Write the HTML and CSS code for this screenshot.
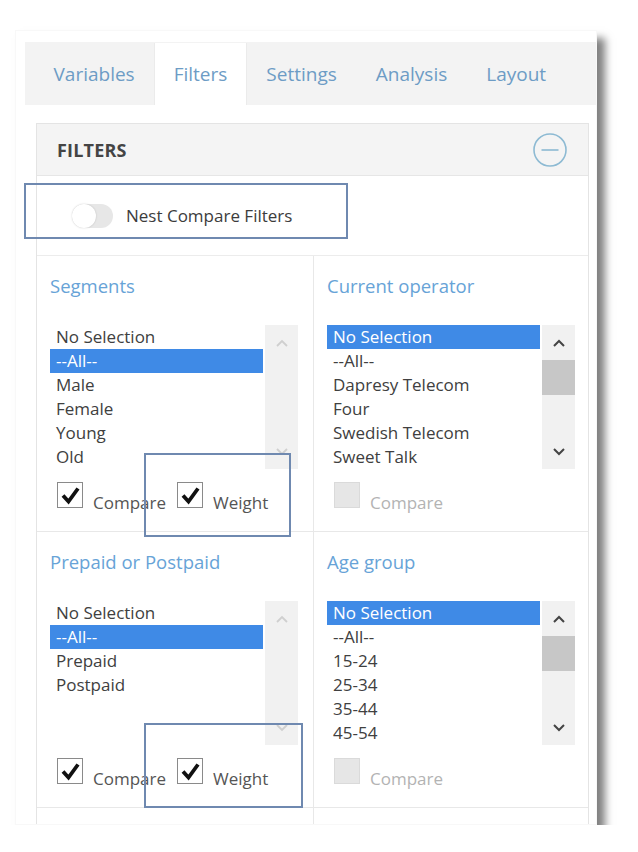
FILE: index.html
```html
<!DOCTYPE html>
<html lang="en">
<head>
<meta charset="utf-8">
<title>Filters</title>
<link rel="stylesheet" href="styles.css">
</head>
<body>
<div class="frame">
  <nav class="tabs">
    <span class="tab">Variables</span>
    <span class="tab active">Filters</span>
    <span class="tab">Settings</span>
    <span class="tab">Analysis</span>
    <span class="tab">Layout</span>
  </nav>

  <section class="panel">
    <header class="panel-head">
      <h2 class="panel-title">FILTERS</h2>
      <svg class="collapse" viewBox="0 0 34 34" width="34" height="34" aria-hidden="true">
        <circle cx="17" cy="17" r="16" fill="none" stroke="#8dbad3" stroke-width="1.6"/>
        <line x1="8.5" y1="17" x2="25.5" y2="17" stroke="#8dbad3" stroke-width="1.6"/>
      </svg>
    </header>

    <div class="nest-row">
      <span class="toggle"><span class="knob"></span></span>
      <span class="nest-label">Nest Compare Filters</span>
    </div>

    <div class="grid">
      <div class="cell">
        <h3 class="cell-title">Segments</h3>
        <div class="listbox">
          <ul class="options">
            <li>No Selection</li>
            <li class="sel">--All--</li>
            <li>Male</li>
            <li>Female</li>
            <li>Young</li>
            <li>Old</li>
          </ul>
          <div class="scrollbar off">
            <div class="arrow"><svg viewBox="0 0 12 8" width="12" height="8"><polyline points="1,7 6,2 11,7" fill="none" stroke="currentColor" stroke-width="1.8"/></svg></div>
            <div class="track"></div>
            <div class="arrow"><svg viewBox="0 0 12 8" width="12" height="8"><polyline points="1,1 6,6 11,1" fill="none" stroke="currentColor" stroke-width="1.8"/></svg></div>
          </div>
        </div>
        <div class="checks">
          <label class="check"><span class="box"><svg viewBox="0 0 24 24" width="24" height="24"><path d="M5 12.5 L10.5 18.5 L20 5.5" fill="none" stroke="#111" stroke-width="3.8"/></svg></span><span class="check-text">Compare</span></label>
          <label class="check"><span class="box"><svg viewBox="0 0 24 24" width="24" height="24"><path d="M5 12.5 L10.5 18.5 L20 5.5" fill="none" stroke="#111" stroke-width="3.8"/></svg></span><span class="check-text">Weight</span></label>
        </div>
      </div>

      <div class="cell">
        <h3 class="cell-title">Current operator</h3>
        <div class="listbox">
          <ul class="options">
            <li class="sel">No Selection</li>
            <li>--All--</li>
            <li>Dapresy Telecom</li>
            <li>Four</li>
            <li>Swedish Telecom</li>
            <li>Sweet Talk</li>
          </ul>
          <div class="scrollbar">
            <div class="arrow"><svg viewBox="0 0 12 8" width="12" height="8"><polyline points="1,7 6,2 11,7" fill="none" stroke="currentColor" stroke-width="2"/></svg></div>
            <div class="thumb"></div>
            <div class="track"></div>
            <div class="arrow"><svg viewBox="0 0 12 8" width="12" height="8"><polyline points="1,1 6,6 11,1" fill="none" stroke="currentColor" stroke-width="2"/></svg></div>
          </div>
        </div>
        <div class="checks">
          <label class="check disabled"><span class="box off"></span><span class="check-text">Compare</span></label>
        </div>
      </div>

      <div class="cell">
        <h3 class="cell-title">Prepaid or Postpaid</h3>
        <div class="listbox">
          <ul class="options">
            <li>No Selection</li>
            <li class="sel">--All--</li>
            <li>Prepaid</li>
            <li>Postpaid</li>
          </ul>
          <div class="scrollbar off">
            <div class="arrow"><svg viewBox="0 0 12 8" width="12" height="8"><polyline points="1,7 6,2 11,7" fill="none" stroke="currentColor" stroke-width="1.8"/></svg></div>
            <div class="track"></div>
            <div class="arrow"><svg viewBox="0 0 12 8" width="12" height="8"><polyline points="1,1 6,6 11,1" fill="none" stroke="currentColor" stroke-width="1.8"/></svg></div>
          </div>
        </div>
        <div class="checks">
          <label class="check"><span class="box"><svg viewBox="0 0 24 24" width="24" height="24"><path d="M5 12.5 L10.5 18.5 L20 5.5" fill="none" stroke="#111" stroke-width="3.8"/></svg></span><span class="check-text">Compare</span></label>
          <label class="check"><span class="box"><svg viewBox="0 0 24 24" width="24" height="24"><path d="M5 12.5 L10.5 18.5 L20 5.5" fill="none" stroke="#111" stroke-width="3.8"/></svg></span><span class="check-text">Weight</span></label>
        </div>
      </div>

      <div class="cell">
        <h3 class="cell-title">Age group</h3>
        <div class="listbox">
          <ul class="options">
            <li class="sel">No Selection</li>
            <li>--All--</li>
            <li>15-24</li>
            <li>25-34</li>
            <li>35-44</li>
            <li>45-54</li>
          </ul>
          <div class="scrollbar">
            <div class="arrow"><svg viewBox="0 0 12 8" width="12" height="8"><polyline points="1,7 6,2 11,7" fill="none" stroke="currentColor" stroke-width="2"/></svg></div>
            <div class="thumb"></div>
            <div class="track"></div>
            <div class="arrow"><svg viewBox="0 0 12 8" width="12" height="8"><polyline points="1,1 6,6 11,1" fill="none" stroke="currentColor" stroke-width="2"/></svg></div>
          </div>
        </div>
        <div class="checks">
          <label class="check disabled"><span class="box off"></span><span class="check-text">Compare</span></label>
        </div>
      </div>

      <div class="cell empty"></div>
      <div class="cell empty"></div>
    </div>
  </section>

  <div class="annot a1"></div>
  <div class="annot a2"></div>
  <div class="annot a3"></div>
</div>
</body>
</html>
```

FILE: styles.css
```css
* { box-sizing: border-box; }

html, body {
  margin: 0;
  background: #fff;
}

body {
  font-family: "Open Sans", "Noto Sans", sans-serif;
  color: #444;
}

.frame {
  position: relative;
  margin: 30px 0 0 15px;
  width: 582px;
  height: 795px;
  overflow: hidden;
  background: #fff;
  border: 1px solid #f8f8f8;
  box-shadow: 8px 8px 8px rgba(0, 0, 0, 0.5);
}

/* Tabs */
.tabs {
  display: flex;
  margin: 11px 0 0 9px;
  height: 63px;
  padding-left: 9px;
  background: #f3f3f3;
}

.tab {
  display: flex;
  align-items: center;
  padding: 0 19.5px;
  font-size: 19px;
  color: #6d9cc5;
  white-space: nowrap;
}

.tab.active {
  background: #fff;
  margin-top: 1px;
  padding: 0 18.5px;
  border-left: 1px solid #ebebeb;
  border-right: 1px solid #ebebeb;
}

/* Panel */
.panel {
  margin: 18px 7px 0 20px;
  border: 1px solid #e4e4e4;
  border-bottom: none;
}

.panel-head {
  display: flex;
  align-items: center;
  justify-content: space-between;
  height: 52px;
  padding: 0 21px 0 20px;
  background: #f4f4f4;
  border-bottom: 1px solid #e6e6e6;
}

.panel-title {
  margin: 0;
  font-size: 18px;
  font-weight: 700;
  color: #444;
  letter-spacing: 0.2px;
}

.collapse { display: block; }

.nest-row {
  display: flex;
  align-items: center;
  gap: 13px;
  height: 80px;
  padding-left: 35px;
  border-bottom: 1px solid #ececec;
}

.toggle {
  position: relative;
  width: 41px;
  height: 24px;
  border-radius: 12px;
  background: #e7e7e7;
}

.knob {
  position: absolute;
  left: 0;
  top: 0;
  width: 24px;
  height: 24px;
  border-radius: 50%;
  background: #fff;
  box-shadow: 0 0 2px rgba(0, 0, 0, 0.18);
}

.nest-label {
  font-size: 17px;
  color: #3c3c3c;
}

/* Grid of filter cells */
.grid {
  display: grid;
  grid-template-columns: 277px 1fr;
}

.cell {
  padding: 17px 13px 23px 13px;
  border-bottom: 1px solid #e8e8e8;
}

.cell:nth-child(odd) {
  border-right: 1px solid #e8e8e8;
}

.cell.empty {
  height: 60px;
  border-bottom: none;
}

.cell-title {
  margin: 0;
  font-size: 18.5px;
  line-height: 26px;
  font-weight: 400;
  color: #67a3d7;
  white-space: nowrap;
}

.listbox {
  display: flex;
  gap: 2px;
  width: 248px;
  height: 144px;
  margin-top: 26px;
}

.options {
  list-style: none;
  margin: 0;
  padding: 0;
  width: 213px;
}

.options li {
  height: 24px;
  line-height: 24px;
  padding-left: 6px;
  font-size: 17px;
  color: #404040;
  white-space: nowrap;
}

.options li.sel {
  background: #3f8ae6;
  color: #fff;
}

.scrollbar {
  display: flex;
  flex-direction: column;
  width: 33px;
  background: #f1f1f1;
  color: #444;
}

.scrollbar.off { color: #cfcfcf; }

.arrow {
  display: flex;
  align-items: center;
  justify-content: center;
  height: 35px;
}

.arrow svg { display: block; }

.thumb {
  height: 35px;
  background: #c7c7c7;
}

.track { flex: 1; }

/* Checkboxes */
.checks {
  display: flex;
  align-items: flex-end;
  height: 26px;
  margin-top: 13px;
  padding-left: 7px;
}

.check {
  display: flex;
  align-items: flex-end;
  gap: 10px;
  margin-right: 11px;
}

.box {
  display: flex;
  align-items: center;
  justify-content: center;
  width: 26px;
  height: 26px;
  border: 1px solid #8a8a8a;
  background: #fff;
}

.box svg { display: block; }

.box.off {
  background: #e6e6e6;
  border-color: #dadada;
}

.check-text {
  font-size: 17px;
  line-height: 17px;
  color: #555;
  margin-bottom: -3px;
}

.check.disabled .check-text { color: #b3b3b3; }

/* Annotation boxes drawn over the screenshot */
.annot {
  position: absolute;
  border: 2px solid #6f89b0;
  pointer-events: none;
}

.a1 { left: 8px; top: 152px; width: 324px; height: 56px; }
.a2 { left: 128px; top: 422px; width: 147px; height: 84px; }
.a3 { left: 128px; top: 692px; width: 159px; height: 85px; }
```
